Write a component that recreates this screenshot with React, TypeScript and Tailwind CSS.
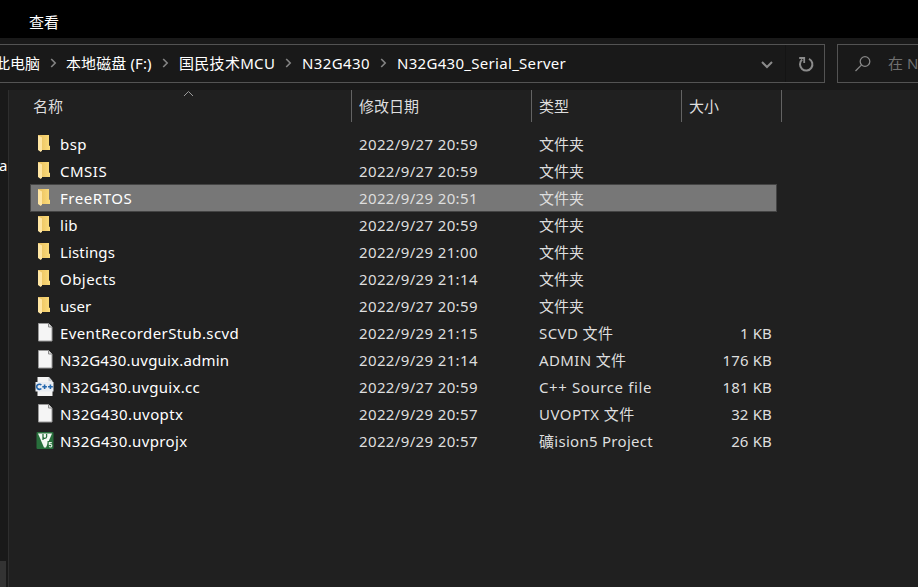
import { FC } from "react";
import clsx from "clsx";

type Kind = "folder" | "file" | "cpp" | "keil";

type Entry = {
  name: string;
  date: string;
  type: string;
  size?: string;
  kind: Kind;
  // per-row tracking for the name and type columns
  nameCls?: string;
  typeCls?: string;
};

const entries: Entry[] = [
  { name: "bsp", date: "2022/9/27 20:59", type: "文件夹", kind: "folder", nameCls: "tracking-[0.4px]" },
  { name: "CMSIS", date: "2022/9/27 20:59", type: "文件夹", kind: "folder", nameCls: "tracking-[0.5px]" },
  { name: "FreeRTOS", date: "2022/9/29 20:51", type: "文件夹", kind: "folder", nameCls: "tracking-[0.55px]" },
  { name: "lib", date: "2022/9/27 20:59", type: "文件夹", kind: "folder", nameCls: "tracking-[0.3px]" },
  { name: "Listings", date: "2022/9/29 21:00", type: "文件夹", kind: "folder", nameCls: "tracking-[0.15px]" },
  { name: "Objects", date: "2022/9/29 21:14", type: "文件夹", kind: "folder", nameCls: "tracking-[0.45px]" },
  { name: "user", date: "2022/9/27 20:59", type: "文件夹", kind: "folder" },
  { name: "EventRecorderStub.scvd", date: "2022/9/29 21:15", type: "SCVD 文件", size: "1 KB", kind: "file", nameCls: "tracking-[0.4px]", typeCls: "tracking-[0.4px]" },
  { name: "N32G430.uvguix.admin", date: "2022/9/29 21:14", type: "ADMIN 文件", size: "176 KB", kind: "file", nameCls: "tracking-[0.2px]", typeCls: "tracking-[0.35px]" },
  { name: "N32G430.uvguix.cc", date: "2022/9/27 20:59", type: "C++ Source file", size: "181 KB", kind: "cpp", nameCls: "tracking-[0.3px]", typeCls: "tracking-[0.6px]" },
  { name: "N32G430.uvoptx", date: "2022/9/29 20:57", type: "UVOPTX 文件", size: "32 KB", kind: "file", nameCls: "tracking-[0.4px]", typeCls: "tracking-[0.45px]" },
  { name: "N32G430.uvprojx", date: "2022/9/29 20:57", type: "礦ision5 Project", size: "26 KB", kind: "keil", nameCls: "tracking-[0.36px]", typeCls: "tracking-[0.28px]" },
];

const FolderIcon = () => (
  <svg width="20" height="20" viewBox="0 0 20 20">
    <defs>
      <linearGradient id="folder-back" x1="0" x2="1">
        <stop offset="0" stopColor="#e9bf5c" />
        <stop offset="1" stopColor="#fbdc7c" />
      </linearGradient>
    </defs>
    <path d="M4 1h11v10.5l1 .5v4H6z" fill="url(#folder-back)" />
    <path d="M4 1.2 8 3.4v13.1l-1.2 1.6L4 16z" fill="#ffe6a3" />
  </svg>
);

const FileIcon = () => (
  <svg width="20" height="20" viewBox="0 0 20 20">
    <path d="M4.5.5h10l3.5 3.5v14H4.5z" fill="#f5f5f5" stroke="#999" />
    <path d="M14.5.5V4H18" fill="#ddd" stroke="#8a8a8a" />
  </svg>
);

const CppIcon = () => (
  <svg width="20" height="20" viewBox="0 0 20 20">
    <path d="M3.5 0H15l3.5 4v15h-15z" fill="#f4f4f4" />
    <path d="M14.5 0v4.2h4z" fill="#c6cbd0" />
    <path d="M1.5 5h18v9.5h-18z" fill="#e9edf2" />
    <path
      d="M7.3 8.1a2.6 2.6 0 1 0 0 3.4M8.3 9.8h4.6M10.6 7.5v4.6M14 9.8h4.8M16.4 7.5v4.6"
      fill="none"
      stroke="#2467ad"
      strokeWidth="1.6"
    />
  </svg>
);

const KeilIcon = () => (
  <svg width="20" height="20" viewBox="0 0 20 20">
    <rect x="2.5" y="1" width="17" height="17" rx="1" fill="#286f3c" />
    <path d="M4 2.5h14L12 16.5h-2z" fill="#f3f8f3" />
    <path d="M9 3v6M9 5.8c0 2 3.6 2 3.6 0V3" fill="none" stroke="#286f3c" strokeWidth="1.3" />
    <path d="M13.5 10h5.3v7.3h-5.3z" fill="#286f3c" />
    <path d="M17.8 11.6h-2.5v2c1.4-.5 2.5 0 2.5 1.1 0 1.4-1.6 1.5-2.8.9" fill="none" stroke="#e2efe2" strokeWidth="1.1" />
  </svg>
);

const icons: Record<Kind, FC> = { folder: FolderIcon, file: FileIcon, cpp: CppIcon, keil: KeilIcon };

const Crumb = () => (
  <svg className="shrink-0" width="8" height="12" viewBox="0 0 8 12">
    <path d="M2.2 2l4 4-4 4" fill="none" stroke="#858585" strokeWidth="1.6" />
  </svg>
);

const AddressBar = () => (
  <div className="flex h-[52px] bg-[#191919] pt-1.5 text-white">
    <div className="flex h-[39px] w-[825px] border border-l-0 border-[#535353]">
      <div className="flex w-[786px] items-center border-r border-[#141414] pb-0.5">
        <span className="-ml-[5px] w-[54px] whitespace-nowrap">此电脑</span>
        <Crumb />
        <span className="ml-[9px] w-[95px] tracking-[0.1px] whitespace-nowrap">本地磁盘 (F:)</span>
        <Crumb />
        <span className="ml-[10px] w-[105px] tracking-[0.3px] whitespace-nowrap">国民技术MCU</span>
        <Crumb />
        <span className="ml-[10px] w-[77px] tracking-[0.4px] whitespace-nowrap">N32G430</span>
        <Crumb />
        <span className="ml-[10px] tracking-[0.3px] whitespace-nowrap">N32G430_Serial_Server</span>
        <svg className="mt-0.5 mr-[11px] ml-auto" width="14" height="14" viewBox="0 0 14 14">
          <path d="M2 5l5 5 5-5" fill="none" stroke="#8b8b8b" strokeWidth="2" />
        </svg>
      </div>
      <div className="flex flex-1 items-center justify-center pl-0.5">
        <svg width="18" height="18" viewBox="0 0 18 18">
          <path d="M12 3.8A6.2 6.2 0 1 1 5.2 4.6" fill="none" stroke="#8b8b8b" strokeWidth="2" />
          <path d="M2.2 3h5v5" fill="none" stroke="#8b8b8b" strokeWidth="1.8" />
        </svg>
      </div>
    </div>
    <div className="ml-3 flex h-[39px] flex-1 items-center overflow-hidden border border-r-0 border-[#535353] text-[#707070]">
      <svg className="ml-4 shrink-0" width="18" height="18" viewBox="0 0 18 18">
        <circle cx="11" cy="6.5" r="4.8" fill="none" stroke="#868686" strokeWidth="1.3" />
        <path d="M7.6 9.9 1.5 16" stroke="#868686" strokeWidth="1.3" />
      </svg>
      <span className="ml-4 pb-0.5 whitespace-nowrap">在 N32G430</span>
    </div>
  </div>
);

const ColumnHeader = () => (
  <div className="relative flex h-8 items-center text-[#dedede]">
    <svg className="absolute top-0 left-[173px]" width="12" height="8" viewBox="0 0 12 8">
      <path d="M2 6l4.5-4.5L11 6" fill="none" stroke="#9a9a9a" />
    </svg>
    <div className="flex h-8 w-[343px] items-center border-r border-[#636363] pl-6">名称</div>
    <div className="flex h-8 w-[180px] items-center border-r border-[#636363] pl-[7px]">修改日期</div>
    <div className="flex h-8 w-[150px] items-center border-r border-[#636363] pl-[7px]">类型</div>
    <div className="flex h-8 w-[100px] items-center border-r border-[#636363] pl-[7px]">大小</div>
  </div>
);

const Row: FC<{ entry: Entry; selected: boolean }> = ({ entry, selected }) => {
  const Icon = icons[entry.kind];
  return (
    <div
      className={clsx(
        "flex w-[747px] items-center border whitespace-nowrap",
        selected ? "-mb-px h-7 border-[#444444] bg-[#777777] pb-px" : "h-[27px] border-transparent",
      )}
    >
      <span className="ml-[3px] w-[26px] shrink-0">
        <Icon />
      </span>
      <span className={clsx("w-[299px] shrink-0 text-white", entry.nameCls)}>{entry.name}</span>
      <span className="w-[180px] shrink-0 tracking-[0.36px] text-[#dedede]">{entry.date}</span>
      <span className={clsx("w-[150px] shrink-0 text-[#dedede]", entry.typeCls)}>{entry.type}</span>
      <span className="w-[83px] shrink-0 text-right tracking-[0.15px] text-[#dedede]">{entry.size}</span>
    </div>
  );
};

export default function App() {
  return (
    <div className="flex h-[587px] w-[918px] flex-col overflow-hidden bg-[#191919] font-['Noto_Sans','Noto_Sans_CJK_SC',sans-serif] text-[15px] leading-5">
      <div className="flex h-[38px] items-center bg-black pt-1.5 pl-[29px] text-white">查看</div>
      <AddressBar />
      <div className="flex flex-1">
        <div className="flex w-2 flex-col justify-between overflow-hidden text-white">
          <span className="-ml-px pt-[65px]">a</span>
          <div className="h-[26px] w-1.5 bg-[#333333]" />
        </div>
        <div className="flex-1 border-l border-[#2e2e2e] bg-[#202020]">
          <ColumnHeader />
          <div className="mt-2 ml-[21px]">
            {entries.map((e, i) => (
              <Row key={e.name} entry={e} selected={i === 2} />
            ))}
          </div>
        </div>
      </div>
    </div>
  );
}
